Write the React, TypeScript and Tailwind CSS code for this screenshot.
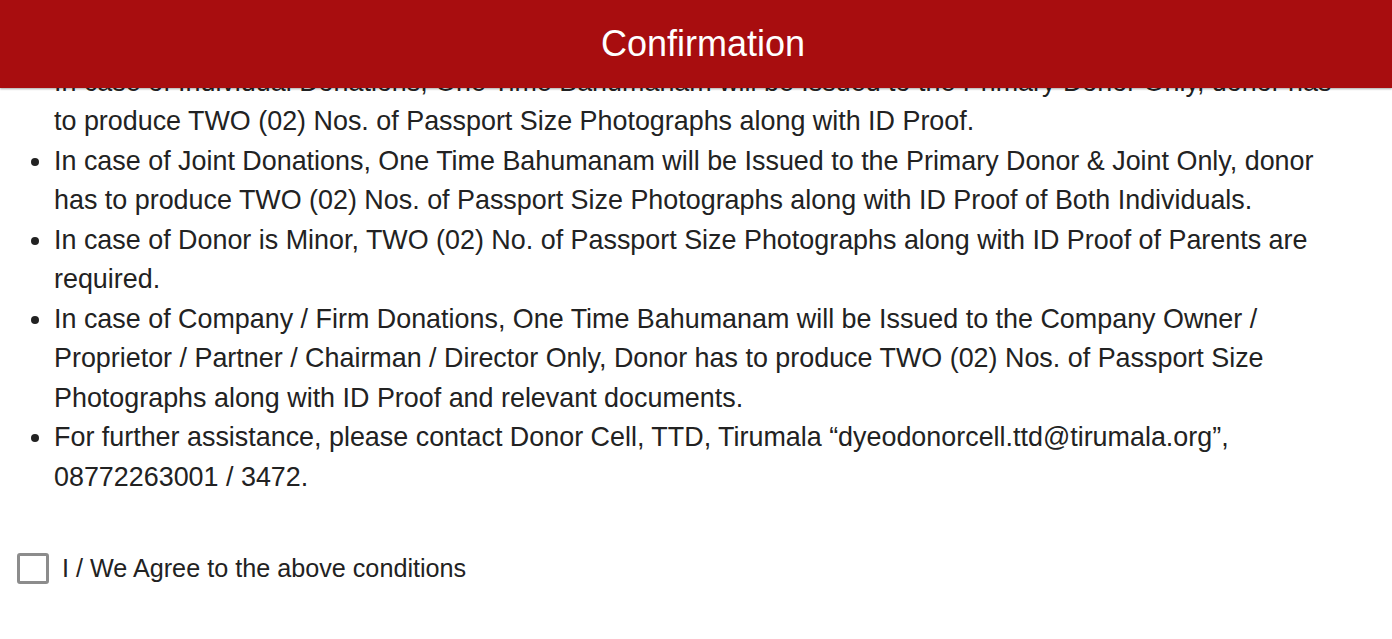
const items = [
  "In case of Individual Donations, One Time Bahumanam will be Issued to the Primary Donor Only, donor has to produce TWO (02) Nos. of Passport Size Photographs along with ID Proof.",
  "In case of Joint Donations, One Time Bahumanam will be Issued to the Primary Donor & Joint Only, donor has to produce TWO (02) Nos. of Passport Size Photographs along with ID Proof of Both Individuals.",
  "In case of Donor is Minor, TWO (02) No. of Passport Size Photographs along with ID Proof of Parents are required.",
  "In case of Company / Firm Donations, One Time Bahumanam will be Issued to the Company Owner / Proprietor / Partner / Chairman / Director Only, Donor has to produce TWO (02) Nos. of Passport Size Photographs along with ID Proof and relevant documents.",
  "For further assistance, please contact Donor Cell, TTD, Tirumala \u201cdyeodonorcell.ttd@tirumala.org\u201d, 08772263001 / 3472.",
];

const App = () => {
  return (
    <div
      className="relative h-[639px] w-[1392px] overflow-hidden bg-white text-[#222]"
      style={{ fontFamily: '"Liberation Sans", Arial, sans-serif' }}
    >
      <div className="absolute inset-x-0 top-0 z-10 flex h-[88px] items-center justify-center bg-[#a80d0f] pb-px pl-[14px] shadow-[0_1px_2px_rgba(0,0,0,0.35)]">
        <h1 className="text-[36px] leading-none text-white">Confirmation</h1>
      </div>

      <div className="pt-[63px]">
        <ul className="list-disc pl-[54px] pr-[52px] text-[26.9px] leading-[39.45px]">
          {items.map((t) => (
            <li key={t}>{t}</li>
          ))}
        </ul>

        <label className="mt-[56px] flex items-center gap-[13px] pl-[17px]">
          <span className="h-[31px] w-[32px] rounded-[3px] border-[3px] border-[#8c8c8c] bg-white" />
          <span className="text-[25.2px] leading-none">I / We Agree to the above conditions</span>
        </label>
      </div>
    </div>
  );
};

export default App;
